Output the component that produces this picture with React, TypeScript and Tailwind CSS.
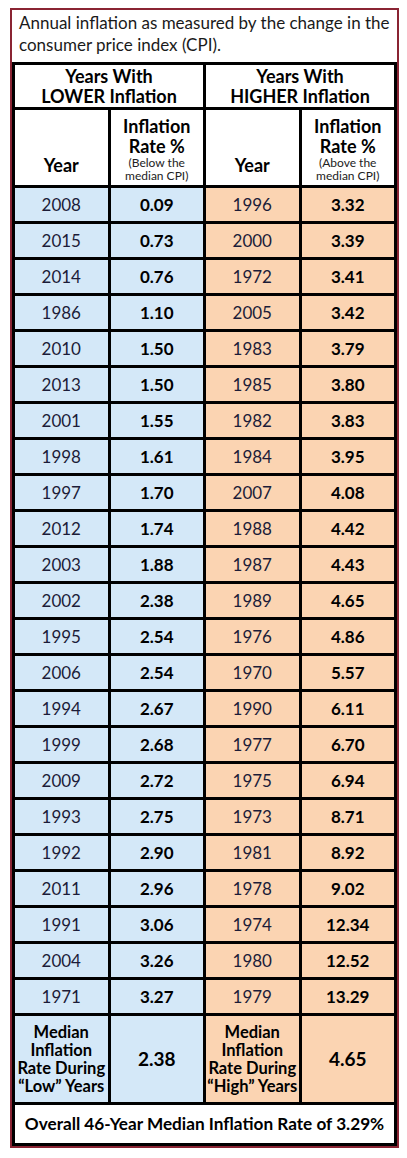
import React from "react";

const low: [string, string][] = [
  ["2008", "0.09"], ["2015", "0.73"], ["2014", "0.76"], ["1986", "1.10"], ["2010", "1.50"],
  ["2013", "1.50"], ["2001", "1.55"], ["1998", "1.61"], ["1997", "1.70"], ["2012", "1.74"],
  ["2003", "1.88"], ["2002", "2.38"], ["1995", "2.54"], ["2006", "2.54"], ["1994", "2.67"],
  ["1999", "2.68"], ["2009", "2.72"], ["1993", "2.75"], ["1992", "2.90"], ["2011", "2.96"],
  ["1991", "3.06"], ["2004", "3.26"], ["1971", "3.27"],
];
const high: [string, string][] = [
  ["1996", "3.32"], ["2000", "3.39"], ["1972", "3.41"], ["2005", "3.42"], ["1983", "3.79"],
  ["1985", "3.80"], ["1982", "3.83"], ["1984", "3.95"], ["2007", "4.08"], ["1988", "4.42"],
  ["1987", "4.43"], ["1989", "4.65"], ["1976", "4.86"], ["1970", "5.57"], ["1990", "6.11"],
  ["1977", "6.70"], ["1975", "6.94"], ["1973", "8.71"], ["1981", "8.92"], ["1978", "9.02"],
  ["1974", "12.34"], ["1980", "12.52"], ["1979", "13.29"],
];

export default function App() {
  return (
    <div className="w-[407px] h-[1158px] bg-white pt-[8px] pl-[10px] font-['Lato',sans-serif]">
      <div className="w-[389px] border-2 border-[#8a2433] bg-white">
        <div className="h-[52px] pl-[7px] pt-[2px] text-[17px] leading-[22px] text-[#1a1a1a] whitespace-nowrap">
          <div>Annual inflation as measured by the change in the</div>
          <div>consumer price index (CPI).</div>
        </div>
        <div className="grid grid-cols-4 gap-[3px] bg-black border-[3px] border-black">
          <div className="col-span-2 h-[42px] bg-white flex flex-col items-center justify-center text-[18px] leading-[20px] font-bold text-black">
            <span>Years With</span>
            <span>LOWER Inflation</span>
          </div>
          <div className="col-span-2 h-[42px] bg-white flex flex-col items-center justify-center text-[18px] leading-[20px] font-bold text-black">
            <span>Years With</span>
            <span>HIGHER Inflation</span>
          </div>

          <div className="h-[75px] bg-white flex items-end justify-center pb-[10px] text-[18px] font-bold text-black leading-[20px]">Year</div>
          <div className="h-[75px] bg-white flex flex-col items-center pt-[6px] text-black">
            <span className="text-[18px] leading-[20px] font-bold">Inflation</span>
            <span className="text-[18px] leading-[20px] font-bold">Rate %</span>
            <span className="text-[12px] leading-[13px] text-[#222]">(Below the</span>
            <span className="text-[12px] leading-[13px] text-[#222]">median CPI)</span>
          </div>
          <div className="h-[75px] bg-white flex items-end justify-center pb-[10px] text-[18px] font-bold text-black leading-[20px]">Year</div>
          <div className="h-[75px] bg-white flex flex-col items-center pt-[6px] text-black">
            <span className="text-[18px] leading-[20px] font-bold">Inflation</span>
            <span className="text-[18px] leading-[20px] font-bold">Rate %</span>
            <span className="text-[12px] leading-[13px] text-[#222]">(Above the</span>
            <span className="text-[12px] leading-[13px] text-[#222]">median CPI)</span>
          </div>

          {low.map((l, i) => {
            const h = high[i];
            return (
              <React.Fragment key={i}>
                <div className="h-[33px] bg-[#d4e8f8] flex items-center justify-center text-[17px] text-[#1c1c38]">{l[0]}</div>
                <div className="h-[33px] bg-[#d4e8f8] flex items-center justify-center text-[17px] font-bold text-black">{l[1]}</div>
                <div className="h-[33px] bg-[#fbd4b2] flex items-center justify-center text-[17px] text-[#1c1c38]">{h[0]}</div>
                <div className="h-[33px] bg-[#fbd4b2] flex items-center justify-center text-[17px] font-bold text-black">{h[1]}</div>
              </React.Fragment>
            );
          })}

          <div className="h-[86px] bg-[#d4e8f8] flex flex-col items-center justify-center text-[16.5px] leading-[18px] font-bold text-black whitespace-nowrap">
            <span>Median</span>
            <span>Inflation</span>
            <span>Rate During</span>
            <span>“Low” Years</span>
          </div>
          <div className="h-[86px] bg-[#d4e8f8] flex items-center justify-center text-[19px] font-bold text-black">2.38</div>
          <div className="h-[86px] bg-[#fbd4b2] flex flex-col items-center justify-center text-[16.5px] leading-[18px] font-bold text-black whitespace-nowrap">
            <span>Median</span>
            <span>Inflation</span>
            <span>Rate During</span>
            <span>“High” Years</span>
          </div>
          <div className="h-[86px] bg-[#fbd4b2] flex items-center justify-center text-[19px] font-bold text-black">4.65</div>

          <div className="col-span-4 h-[38px] bg-white flex items-center justify-center text-[17.2px] font-bold text-black whitespace-nowrap">
            Overall 46-Year Median Inflation Rate of 3.29%
          </div>
        </div>
      </div>
    </div>
  );
}
